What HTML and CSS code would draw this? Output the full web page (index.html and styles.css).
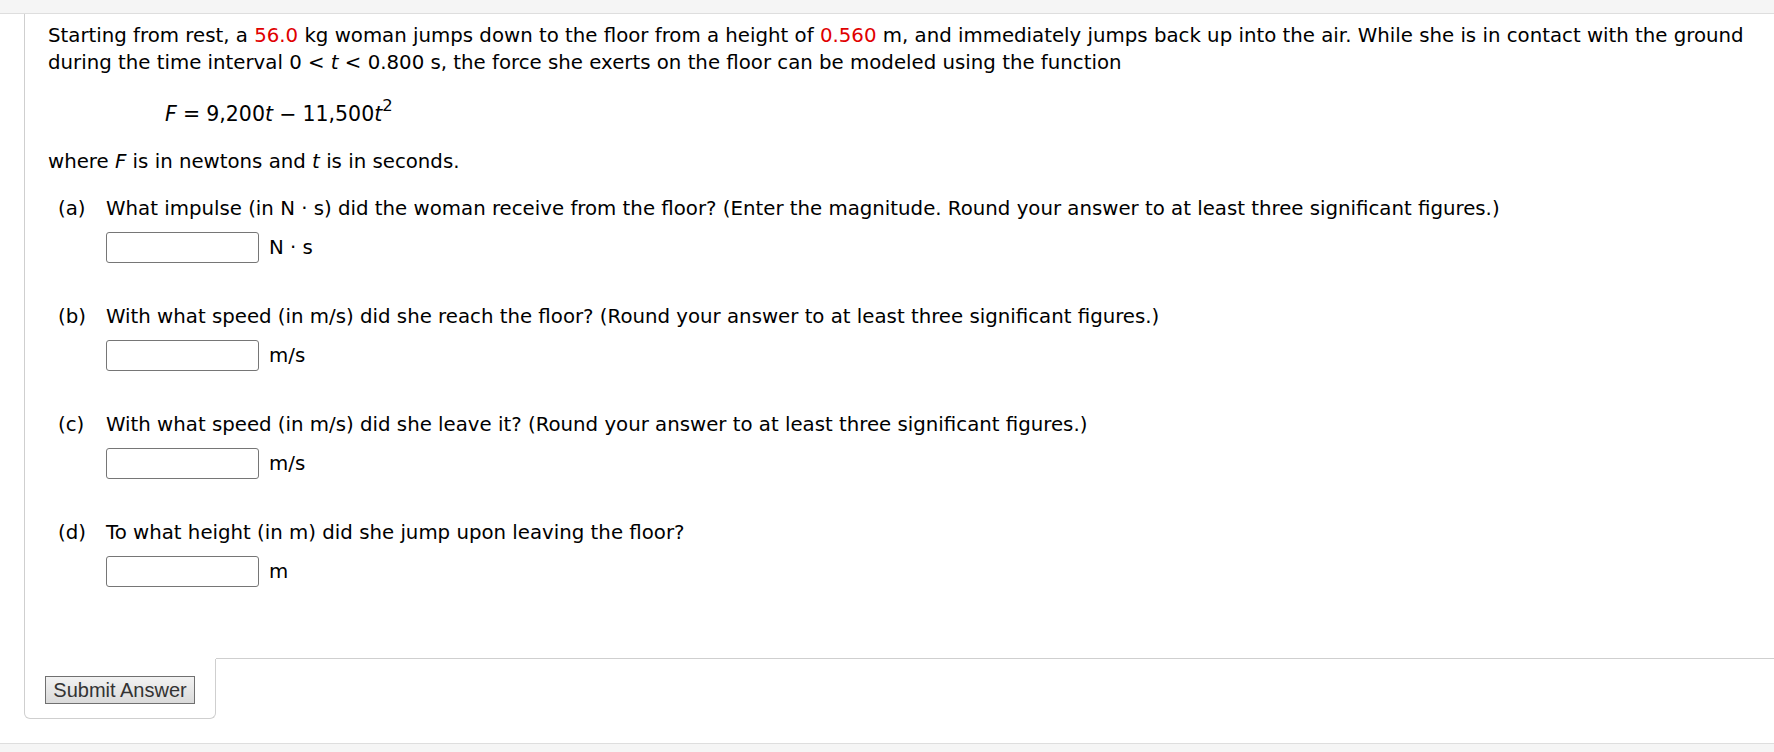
FILE: index.html
```html
<!DOCTYPE html>
<html lang="en">
<head>
<meta charset="utf-8">
<title>Question</title>
<link rel="stylesheet" href="styles.css">
</head>
<body>
<div class="topband"></div>
<div class="wrap">
  <div class="panel">
    <p class="intro">Starting from rest, a <span class="red">56.0</span> kg woman jumps down to the floor from a height of <span class="red">0.560</span> m, and immediately jumps back up into the air. While she is in contact with the ground during the time interval 0 &lt; <i>t</i> &lt; 0.800 s, the force she exerts on the floor can be modeled using the function</p>
    <p class="formula"><i>F</i><span class="op">=</span>9,200<i>t</i><span class="op">&minus;</span>11,500<i>t</i><sup>2</sup></p>
    <p class="where">where <i>F</i> is in newtons and <i>t</i> is in seconds.</p>

    <div class="part">
      <div class="qline"><span class="label">(a)</span><span class="qtext">What impulse (in N &middot; s) did the woman receive from the floor? (Enter the magnitude. Round your answer to at least three significant figures.)</span></div>
      <div class="ansrow"><input class="ans" type="text"><span class="unit">N &middot; s</span></div>
    </div>
    <div class="part">
      <div class="qline"><span class="label">(b)</span><span class="qtext">With what speed (in m/s) did she reach the floor? (Round your answer to at least three significant figures.)</span></div>
      <div class="ansrow"><input class="ans" type="text"><span class="unit">m/s</span></div>
    </div>
    <div class="part">
      <div class="qline"><span class="label">(c)</span><span class="qtext">With what speed (in m/s) did she leave it? (Round your answer to at least three significant figures.)</span></div>
      <div class="ansrow"><input class="ans" type="text"><span class="unit">m/s</span></div>
    </div>
    <div class="part">
      <div class="qline"><span class="label">(d)</span><span class="qtext">To what height (in m) did she jump upon leaving the floor?</span></div>
      <div class="ansrow"><input class="ans" type="text"><span class="unit">m</span></div>
    </div>
  </div>
  <div class="bottomrow">
    <div class="tab"><button class="submit" type="button">Submit Answer</button></div>
    <div class="filler"></div>
  </div>
</div>
<div class="footband"></div>
</body>
</html>
```
FILE: styles.css
```css
html, body {
  margin: 0;
  padding: 0;
  background: #fff;
}
body {
  font-family: "DejaVu Sans", Verdana, sans-serif;
  font-size: 19.75px;
  line-height: 27px;
  color: #000;
  overflow: hidden;
}
.topband {
  height: 13px;
  background: #f5f5f5;
  border-bottom: 1px solid #dedede;
}
.wrap {
  padding-left: 24px;
}
.panel {
  border-left: 1px solid #cfcfcf;
  padding: 8px 20px 73px 23px;
}
.panel p {
  margin: 0;
}
.red {
  color: #e00000;
}
.formula {
  margin-top: 25px !important;
  padding-left: 117px;
  font-size: 20.5px;
}
.op {
  margin: 0 0.3em;
}
.formula sup {
  font-size: 0.8em;
  line-height: 0;
  vertical-align: 0.6em;
}
.where {
  margin-top: 20px !important;
}
.part {
  margin-left: 10px;
  margin-top: 20px;
}
.part + .part {
  margin-top: 41px;
}
.qline {
  display: flex;
}
.label {
  width: 48px;
  flex: none;
}
.ansrow {
  display: flex;
  align-items: center;
  margin-top: 10px;
  margin-left: 48px;
  height: 30px;
}
.ans {
  box-sizing: border-box;
  width: 153px;
  height: 31px;
  margin: 0;
  border: 1px solid #767676;
  border-radius: 3px;
  background: #fff;
  font: inherit;
  padding: 0 4px;
}
.unit {
  margin-left: 10px;
}
.bottomrow {
  display: flex;
}
.tab {
  box-sizing: border-box;
  width: 192px;
  height: 60px;
  border: 1px solid #cfcfcf;
  border-top: none;
  border-radius: 0 0 6px 6px;
  padding: 17px 0 0 20px;
}
.filler {
  flex: 1;
  border-top: 1px solid #cfcfcf;
  margin-top: -1px;
}
.submit {
  box-sizing: border-box;
  height: 28px;
  width: 150px;
  padding: 0;
  font-family: "Liberation Sans", Arial, sans-serif;
  font-size: 20px;
  line-height: 26px;
  color: #333;
  background: linear-gradient(#f2f2f2, #dadada);
  border: 1px solid #707070;
  border-radius: 0;
}
.footband {
  margin-top: 24px;
  height: 20px;
  background: #f5f5f5;
  border-top: 1px solid #dedede;
}
```
